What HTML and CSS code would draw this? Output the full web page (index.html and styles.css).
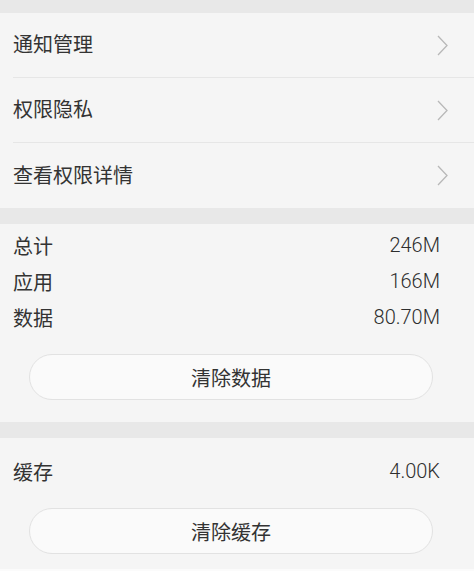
FILE: index.html
```html
<!DOCTYPE html>
<html lang="zh-CN">
<head>
  <meta charset="UTF-8">
  <meta name="viewport" content="width=device-width, initial-scale=1.0">
  <title>应用信息</title>
  <link rel="stylesheet" href="styles.css">
</head>
<body>
  <div class="gap top"></div>

  <!-- links -->
  <ul class="links">
    <li class="link"><span>通知管理</span>
      <svg class="arrow" width="11" height="21" viewBox="0 0 11 21"><polyline points="1,1 10,10.5 1,20" /></svg>
    </li>
    <li class="link"><span>权限隐私</span>
      <svg class="arrow" width="11" height="21" viewBox="0 0 11 21"><polyline points="1,1 10,10.5 1,20" /></svg>
    </li>
    <li class="link"><span>查看权限详情</span>
      <svg class="arrow" width="11" height="21" viewBox="0 0 11 21"><polyline points="1,1 10,10.5 1,20" /></svg>
    </li>
  </ul>

  <div class="gap"></div>

  <!-- storage -->
  <div class="section storage">
    <div class="row"><span>总计</span><span class="num">246M</span></div>
    <div class="row"><span>应用</span><span class="num">166M</span></div>
    <div class="row"><span>数据</span><span class="num">80.70M</span></div>
    <button class="btn">清除数据</button>
  </div>

  <div class="gap"></div>

  <!-- cache -->
  <div class="section cache">
    <div class="row"><span>缓存</span><span class="num">4.00K</span></div>
    <button class="btn">清除缓存</button>
  </div>
</body>
</html>
```

FILE: styles.css
```css
body {
  margin: 0;
  background: #fbfbfb;
  color: #333;
  font-family: "Noto Sans CJK SC", sans-serif;
  font-size: 20px;
}

.gap {
  height: 16px;
  background: #e8e8e8;
}

.gap.top {
  height: 13px;
}

.links {
  list-style: none;
  margin: 0;
  padding: 0 0 0 13px;
  background: #f5f5f5;
}

.link {
  height: 61px;
  padding: 0 26px 3px 0;
  display: flex;
  align-items: center;
  justify-content: space-between;
  border-bottom: 1px solid #e6e6e6;
}

.link:last-child {
  height: 62px;
  border-bottom: none;
}

.link .arrow {
  margin-top: 3px;
}

.arrow polyline {
  fill: none;
  stroke: #b8b8b8;
  stroke-width: 1.3;
}

.section {
  background: #f5f5f5;
  padding: 3px 34px 22px 13px;
}

.cache {
  padding-top: 15px;
  padding-bottom: 15px;
}

.row {
  height: 36px;
  display: flex;
  align-items: center;
  justify-content: space-between;
}

.num {
  font-family: Roboto, sans-serif;
  font-weight: 300;
  font-size: 20px;
  color: #2e2e2e;
}

.btn {
  display: block;
  width: 404px;
  height: 46px;
  margin: 19px 0 0 16px;
  border: 1px solid #e2e2e2;
  border-radius: 23px;
  background: #fafafa;
  color: #333;
  font-family: "Noto Sans CJK SC", sans-serif;
  font-size: 20px;
}

.cache .btn {
  margin-top: 19px;
}
```
